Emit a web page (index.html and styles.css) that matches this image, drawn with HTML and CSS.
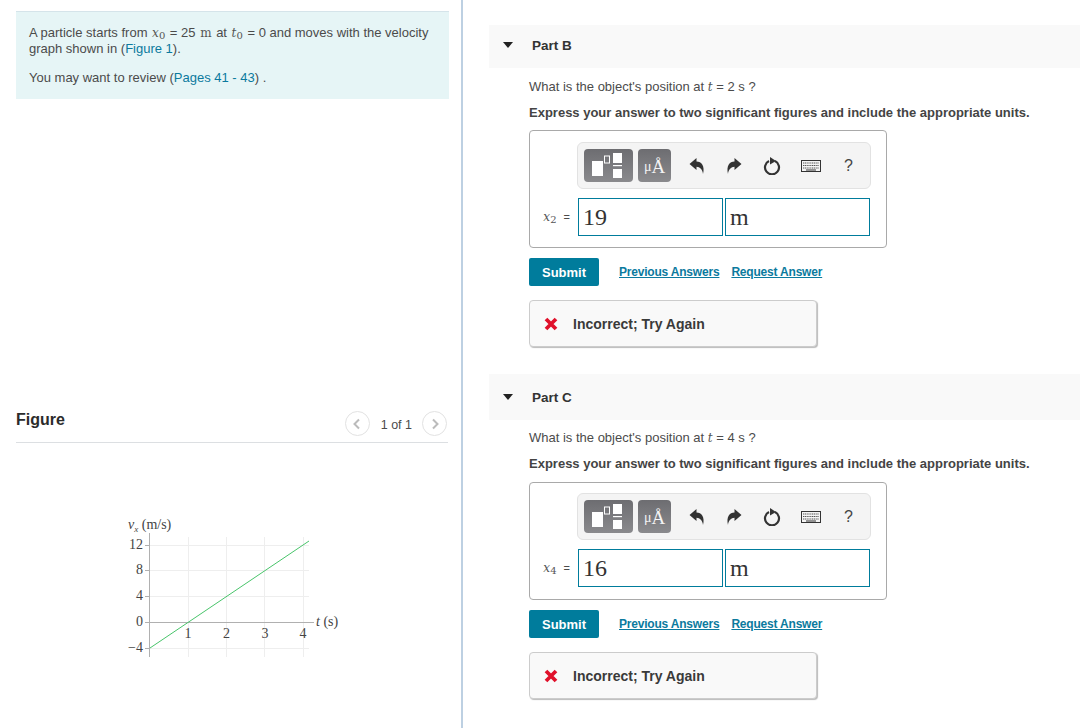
FILE: index.html
```html
<!DOCTYPE html>
<html lang="en">
<head>
<meta charset="utf-8">
<title>Particle velocity graph</title>
<link rel="stylesheet" href="styles.css">
</head>
<body>
<svg class="defs" width="0" height="0" aria-hidden="true">
  <defs>
    <symbol id="i-undo" viewBox="0 0 16 16"><path d="M0.500 6 L7.500 0 V3.500 C12.500 3.500 16 8 14 16 C13.500 11.500 11 9 7.500 8.800 V12 Z" fill="#333"/></symbol>
    <symbol id="i-redo" viewBox="0 0 16 16"><path d="M15.500 6 L8.500 0 V3.500 C3.500 3.500 0 8 2 16 C2.500 11.500 5 9 8.500 8.800 V12 Z" fill="#333"/></symbol>
    <symbol id="i-reset" viewBox="0 0 18 18"><path d="M6 4 A7 7 0 1 0 12 4" fill="none" stroke="#333" stroke-width="2.200"/><path d="M7 0 L13 4 L7 7.500 Z" fill="#333"/></symbol>
    <symbol id="i-keys" viewBox="0 0 20 12"><rect x="0.500" y="0.500" width="19" height="11" fill="#f4f4f4" stroke="#333"/><path d="M2 3h16M2 5.500h16M2 8h16" stroke="#555" stroke-width="1.200" stroke-dasharray="1.200 .6"/><path d="M5 10h10" stroke="#333"/></symbol>
    <symbol id="i-templ" viewBox="0 0 48 32"><rect x="7" y="11" width="11" height="15" fill="#fff"/><rect x="19.500" y="6" width="5" height="7" fill="none" stroke="#fff"/><rect x="28" y="3" width="9" height="10" fill="#fff"/><rect x="28" y="15" width="9" height="1.200" fill="#fff"/><rect x="28" y="19" width="9" height="9" fill="#fff"/></symbol>
  </defs>
</svg>
<div class="page">
  <aside class="left">
    <div class="intro">
      <p>A particle starts from <span class="m">x<sub>0</sub></span> = 25 <span class="mr">m</span> at <span class="m">t<sub>0</sub></span> = 0 and moves with the velocity graph shown in (<a href="#">Figure 1</a>).</p>
      <p>You may want to review (<a href="#">Pages 41 - 43</a>) .</p>
    </div>
    <section class="figure">
      <header class="figure-head">
        <h2>Figure</h2>
        <div class="pager">
          <span class="circle"><svg width="10" height="12" viewBox="0 0 10 12"><path d="M7 1.500 L2.500 6 L7 10.500" fill="none" stroke="#bbb" stroke-width="2"/></svg></span>
          <span class="count">1 of 1</span>
          <span class="circle"><svg width="10" height="12" viewBox="0 0 10 12"><path d="M3 1.500 L7.500 6 L3 10.500" fill="none" stroke="#bbb" stroke-width="2"/></svg></span>
        </div>
      </header>
      <svg class="graph" width="260" height="160" viewBox="100 505 260 160">
        <g stroke="#eeeeee" stroke-width="1">
          <path d="M150 545.500H309M150 570.500H309M150 596.500H309M150 648.500H309"/>
          <path d="M188.500 537V657M226.500 537V657M264.500 537V657M303.500 537V657"/>
        </g>
        <g stroke="#b0b0b0" stroke-width="1">
          <path d="M149.500 533V657M149.500 622.500H314"/>
          <path d="M145 545.500H150M145 570.500H150M145 596.500H150M145 648.500H150M145 622.500H150"/>
        </g>
        <path d="M150 648L309 541" stroke="#48c46a" stroke-width="1" fill="none"/>
        <g class="gt">
          <text x="128" y="529"><tspan font-style="italic">v</tspan><tspan font-style="italic" font-size="9" dy="3">x</tspan><tspan dy="-3"> (m/s)</tspan></text>
          <text x="143" y="549" text-anchor="end">12</text>
          <text x="143" y="574" text-anchor="end">8</text>
          <text x="143" y="600" text-anchor="end">4</text>
          <text x="143" y="626" text-anchor="end">0</text>
          <text x="143" y="652" text-anchor="end">−4</text>
          <text x="188" y="638" text-anchor="middle">1</text>
          <text x="226.500" y="638" text-anchor="middle">2</text>
          <text x="265" y="638" text-anchor="middle">3</text>
          <text x="303" y="638" text-anchor="middle">4</text>
          <text x="316" y="626"><tspan font-style="italic">t</tspan> (s)</text>
        </g>
      </svg>
    </section>
  </aside>
  <main class="right">
    <section class="part part-b">
      <header class="part-head"><span class="tri"></span><h3>Part B</h3></header>
      <div class="part-body">
        <p class="q">What is the object's position at <span class="m">t</span> = 2 s ?</p>
        <p class="hint">Express your answer to two significant figures and include the appropriate units.</p>
        <div class="answer">
          <div class="toolbar">
            <span class="tbtn wide"><svg width="48" height="32"><use href="#i-templ"/></svg></span>
            <span class="tbtn mu"><small>μ</small>Å</span>
            <svg class="ic c1" width="16" height="16"><use href="#i-undo"/></svg>
            <svg class="ic c2" width="16" height="16"><use href="#i-redo"/></svg>
            <svg class="ic c3" width="18" height="18"><use href="#i-reset"/></svg>
            <svg class="ic c4" width="20" height="12"><use href="#i-keys"/></svg>
            <span class="help">?</span>
          </div>
          <div class="entry">
            <span class="lab"><span class="m">x<sub>2</sub></span> =</span>
            <span class="field">19</span>
            <span class="field">m</span>
          </div>
        </div>
        <div class="actions">
          <button class="submit" type="button">Submit</button>
          <a class="act" href="#">Previous Answers</a>
          <a class="act" href="#">Request Answer</a>
        </div>
        <div class="feedback"><svg width="14" height="14" viewBox="0 0 14 14"><path d="M2 2L12 12M12 2L2 12" stroke="#e0112b" stroke-width="3.800"/></svg><span>Incorrect; Try Again</span></div>
      </div>
    </section>
    <section class="part part-c">
      <header class="part-head tall"><span class="tri"></span><h3>Part C</h3></header>
      <div class="part-body">
        <p class="q">What is the object's position at <span class="m">t</span> = 4 s ?</p>
        <p class="hint">Express your answer to two significant figures and include the appropriate units.</p>
        <div class="answer">
          <div class="toolbar">
            <span class="tbtn wide"><svg width="48" height="32"><use href="#i-templ"/></svg></span>
            <span class="tbtn mu"><small>μ</small>Å</span>
            <svg class="ic c1" width="16" height="16"><use href="#i-undo"/></svg>
            <svg class="ic c2" width="16" height="16"><use href="#i-redo"/></svg>
            <svg class="ic c3" width="18" height="18"><use href="#i-reset"/></svg>
            <svg class="ic c4" width="20" height="12"><use href="#i-keys"/></svg>
            <span class="help">?</span>
          </div>
          <div class="entry">
            <span class="lab"><span class="m">x<sub>4</sub></span> =</span>
            <span class="field">16</span>
            <span class="field">m</span>
          </div>
        </div>
        <div class="actions">
          <button class="submit" type="button">Submit</button>
          <a class="act" href="#">Previous Answers</a>
          <a class="act" href="#">Request Answer</a>
        </div>
        <div class="feedback"><svg width="14" height="14" viewBox="0 0 14 14"><path d="M2 2L12 12M12 2L2 12" stroke="#e0112b" stroke-width="3.800"/></svg><span>Incorrect; Try Again</span></div>
      </div>
    </section>
  </main>
</div>
</body>
</html>
```
FILE: styles.css
```css
* { box-sizing: border-box; }
html, body { margin: 0; padding: 0; }
body { width: 1080px; height: 728px; overflow: hidden; background: #fff; font-family: "Liberation Sans", Arial, sans-serif; color: #4b4b4b; font-size: 12px; }
.defs { position: absolute; }
.page { display: flex; height: 728px; }
a { color: #0b7a9e; text-decoration: none; }
p { margin: 0; }

.left { width: 463px; height: 728px; flex: none; padding: 11px 13px 0 16px; border-right: 2px solid #bdd0e2; }
.intro { height: 88px; margin-right: -1px; padding: 13px 13px 0; background: #e6f5f6; border-top: 1px solid #d5e4ea; font-size: 13px; line-height: 16px; }
.intro p + p { margin-top: 13px; }
.m { font-family: "DejaVu Serif", serif; font-style: italic; font-size: 12px; line-height: 0; color: #555; }
.mr { font-family: "DejaVu Serif", serif; font-size: 12px; line-height: 0; color: #555; }
.intro .m { margin: 0 1px; }
.intro .mr { margin: 0 1px; }
sub { font-size: 10px; font-style: normal; line-height: 0; vertical-align: -2px; }

.figure { margin-top: 309px; }
.figure-head { display: flex; align-items: center; justify-content: space-between; height: 35px; border-bottom: 1px solid #dcdfe2; padding-bottom: 10px; }
.figure-head h2 { margin: 0; font-size: 16px; font-weight: 700; color: #2b2b2b; }
.pager { display: flex; align-items: center; gap: 10px; margin: 7px 1px 0 0; }
.circle { display: flex; align-items: center; justify-content: center; width: 25px; height: 25px; border: 1px solid #e2e2e2; border-radius: 50%; }
.count { margin: 2px 0 0 1px; color: #4b4b4b; font-size: 12.500px; }
.graph { display: block; margin: 62px 0 0 84px; }
.gt { font-family: "Liberation Serif", serif; font-size: 14px; fill: #444; }

.right { flex: 1; padding: 25px 0 0 26px; min-width: 0; }
.part-head { display: flex; align-items: center; height: 43px; background: #f9f9f9; padding: 0 0 3px 14px; }
.part-head.tall { height: 46px; padding-bottom: 0; }
.tri { width: 0; height: 0; border-left: 5.500px solid transparent; border-right: 5.500px solid transparent; border-top: 6px solid #222; }
.part-head h3 { margin: 0 0 0 19px; font-size: 13.500px; font-weight: 700; color: #333; }
.part-body { padding: 11px 0 0 40px; }
.part-c .part-body { padding-top: 10px; }
.q { font-size: 13px; line-height: 16px; }
.hint { margin-top: 10px; font-size: 13px; line-height: 16px; font-weight: 700; color: #444; }

.answer { width: 358px; height: 118px; margin-top: 9px; padding: 11px 16px 0 10px; border: 1px solid #a9a9a9; border-radius: 4px; }
.toolbar { display: flex; align-items: center; width: 294px; height: 47px; margin-left: 37px; padding-left: 6px; background: #f4f4f4; border: 1px solid #e2e2e2; border-radius: 6px; }
.tbtn { display: flex; align-items: center; justify-content: center; height: 33px; border-radius: 4px; background: linear-gradient(#6d6d71, #8a8a8d); }
.tbtn.wide { width: 49px; }
.tbtn.mu { width: 33px; margin-left: 5px; padding-top: 3px; color: #f4f4f4; font-family: "Liberation Serif", serif; font-size: 19px; }
.tbtn.mu small { font-size: 14px; }
.ic { flex: none; }
.c1 { margin-left: 18px; }
.c2 { margin-left: 21px; }
.c3 { margin-left: 21px; }
.c4 { margin-left: 20px; }
.help { margin-left: 23px; font-size: 16px; color: #444; }
.entry { display: flex; align-items: center; gap: 2px; margin-top: 9px; }
.lab { width: 36px; padding-right: 6px; text-align: right; white-space: nowrap; font-size: 11px; }
.lab .m { margin-right: 4px; }
.field { display: block; flex: none; width: 145px; height: 38px; padding-left: 4px; border: 1px solid #007c9c; font-family: "Liberation Serif", serif; font-size: 24px; line-height: 36px; color: #333; }

.actions { display: flex; align-items: center; gap: 12px; margin-top: 10px; }
.submit { width: 70px; height: 28px; margin-right: 8px; padding: 0; border: 0; border-radius: 2px; background: #007c9c; color: #fff; font: 700 13px "Liberation Sans", Arial, sans-serif; }
.act { font-size: 12px; font-weight: 700; letter-spacing: -.2px; text-decoration: underline; }
.feedback { display: flex; align-items: center; gap: 15px; width: 288px; height: 47px; margin-top: 14px; padding-left: 14px; background: #f9f9f9; border: 1px solid #ccc; border-radius: 4px; box-shadow: 1px 1px 1px #bbb; font-size: 14px; font-weight: 700; color: #3a3a3a; }
.part-c { margin-top: 27px; }
.part-c .answer { margin-top: 10px; padding-top: 10px; }
```
